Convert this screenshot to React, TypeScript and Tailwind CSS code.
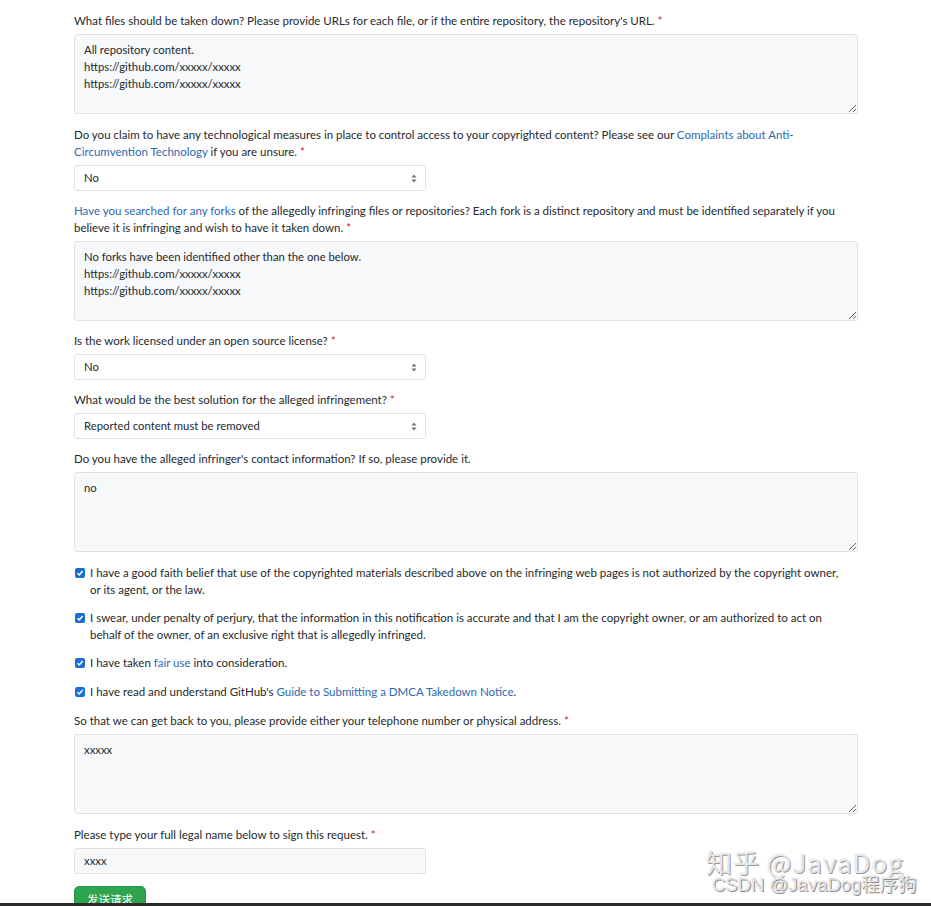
import React from "react";

const font = { fontFamily: "Lato, 'Noto Sans', 'Noto Sans CJK SC', sans-serif" };

function Req() {
  return <span className="text-[#cb2431]"> *</span>;
}

function Link({ children }: { children: React.ReactNode }) {
  return <span className="text-[#2f67b0]">{children}</span>;
}

function Area({ value }: { value: string }) {
  return (
    <textarea
      readOnly
      value={value}
      className="block w-[784px] h-[80px] rounded-[3px] border border-[#dfe2e5] bg-[#f6f8fa] px-[9px] py-[6px] text-[11.3px] leading-[17px] text-[#24292e] outline-none"
      style={font}
    />
  );
}

function SelectBox({ value }: { value: string }) {
  return (
    <div className="flex h-[26px] w-[352px] items-center justify-between rounded-[3px] border border-[#dfe2e5] bg-white pl-[9px] pr-[8px] text-[11.3px] text-[#24292e]">
      <span>{value}</span>
      <svg width="6" height="9" viewBox="0 0 6 9" className="text-[#6a737d]">
        <path d="M3 0.5 L5.5 3.5 L0.5 3.5 Z" fill="currentColor" />
        <path d="M3 8.5 L5.5 5.5 L0.5 5.5 Z" fill="currentColor" />
      </svg>
    </div>
  );
}

function Check({ children }: { children: React.ReactNode }) {
  return (
    <div className="flex items-start">
      <span className="mt-[4px] ml-[1px] mr-[5px] flex h-[10px] w-[10px] shrink-0 items-center justify-center rounded-[2px] bg-[#1a6fd6]">
        <svg width="8" height="8" viewBox="0 0 8 8">
          <path d="M1.5 4.2 L3.3 6 L6.6 2" stroke="white" strokeWidth="1.5" fill="none" />
        </svg>
      </span>
      <div className="whitespace-nowrap leading-[17px]">{children}</div>
    </div>
  );
}

export default function App() {
  return (
    <div className="relative h-[906px] w-[931px] overflow-hidden bg-white text-[11.5px] text-[#24292e]" style={font}>
      <div className="pl-[74px] pt-[12px]">
        <div className="mb-[12px]">
          <div className="mb-[5px] leading-[17px]">
            What files should be taken down? Please provide URLs for each file, or if the entire repository, the repository's URL.
            <Req />
          </div>
          <Area value={"All repository content.\nhttps://github.com/xxxxx/xxxxx\nhttps://github.com/xxxxx/xxxxx"} />
        </div>

        <div className="mb-[11px]">
          <div className="mb-[5px] whitespace-nowrap leading-[17px]">
            Do you claim to have any technological measures in place to control access to your copyrighted content? Please see our{" "}
            <Link>Complaints about Anti-</Link>
            <br />
            <Link>Circumvention Technology</Link> if you are unsure.
            <Req />
          </div>
          <SelectBox value="No" />
        </div>

        <div className="mb-[11px]">
          <div className="mb-[5px] whitespace-nowrap leading-[17px]">
            <Link>Have you searched for any forks</Link> of the allegedly infringing files or repositories? Each fork is a distinct repository and must be identified separately if you
            <br />
            believe it is infringing and wish to have it taken down.
            <Req />
          </div>
          <Area value={"No forks have been identified other than the one below.\nhttps://github.com/xxxxx/xxxxx\nhttps://github.com/xxxxx/xxxxx"} />
        </div>

        <div className="mb-[11px]">
          <div className="mb-[5px] leading-[17px]">
            Is the work licensed under an open source license?
            <Req />
          </div>
          <SelectBox value="No" />
        </div>

        <div className="mb-[11px]">
          <div className="mb-[5px] leading-[17px]">
            What would be the best solution for the alleged infringement?
            <Req />
          </div>
          <SelectBox value="Reported content must be removed" />
        </div>

        <div className="mb-[12px]">
          <div className="mb-[5px] leading-[17px]">
            Do you have the alleged infringer's contact information? If so, please provide it.
          </div>
          <Area value="no" />
        </div>

        <div className="mb-[11px]">
          <Check>
            I have a good faith belief that use of the copyrighted materials described above on the infringing web pages is not authorized by the copyright owner,
            <br />
            or its agent, or the law.
          </Check>
        </div>
        <div className="mb-[11px]">
          <Check>
            I swear, under penalty of perjury, that the information in this notification is accurate and that I am the copyright owner, or am authorized to act on
            <br />
            behalf of the owner, of an exclusive right that is allegedly infringed.
          </Check>
        </div>
        <div className="mb-[12px]">
          <Check>
            I have taken <Link>fair use</Link> into consideration.
          </Check>
        </div>
        <div className="mb-[12px]">
          <Check>
            I have read and understand GitHub's <Link>Guide to Submitting a DMCA Takedown Notice</Link>.
          </Check>
        </div>

        <div className="mb-[12px]">
          <div className="mb-[5px] leading-[17px]">
            So that we can get back to you, please provide either your telephone number or physical address.
            <Req />
          </div>
          <Area value="xxxxx" />
        </div>

        <div className="mb-[12px]">
          <div className="mb-[5px] leading-[17px]">
            Please type your full legal name below to sign this request.
            <Req />
          </div>
          <div className="flex h-[26px] w-[352px] items-center rounded-[3px] border border-[#dfe2e5] bg-[#f6f8fa] pl-[9px] text-[11.3px] text-[#24292e]">
            xxxx
          </div>
        </div>

        <button
          type="button"
          className="h-[28px] rounded-[5px] border border-[#28954a] bg-[#2ea44f] px-[12px] text-[11.5px] text-white"
          style={font}
        >
          发送请求
        </button>
      </div>

      <div
        className="absolute left-[706px] top-[849px] text-[26px] leading-[26px] tracking-[1px] text-[#e6e6e6] [text-shadow:1px_1px_0_#9a9a9a,-1px_-1px_0_#f8f8f8]"
        style={{ fontFamily: "'Noto Sans CJK SC', 'Liberation Sans', sans-serif" }}
      >
        知乎 @JavaDog
      </div>
      <div
        className="absolute left-[712px] top-[875px] text-[18.5px] leading-[20px] text-[#e2e2e2] [text-shadow:1px_1px_0_#8f8f8f,-1px_-1px_0_#f5f5f5]"
        style={{ fontFamily: "'Liberation Sans', 'Noto Sans CJK SC', sans-serif" }}
      >
        CSDN @JavaDog程序狗
      </div>

      <div className="absolute bottom-0 left-0 h-[3px] w-full bg-[#2b2b2b]" />
    </div>
  );
}
